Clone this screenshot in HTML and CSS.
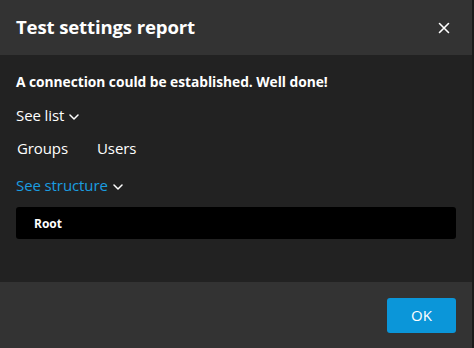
FILE: index.html
```html
<!DOCTYPE html>
<html>
<head>
<meta charset="utf-8">
<link rel="stylesheet" href="styles.css">
</head>
<body>
<div class="page">
  <div class="dialog">
    <div class="header">
      <h1 class="title">Test settings report</h1>
      <button class="close" aria-label="Close">
        <svg width="12" height="12" viewBox="0 0 12 12"><path d="M1.5 1.5L10.5 10.5M10.5 1.5L1.5 10.5" stroke="#fff" stroke-width="1.6" stroke-linecap="round"/></svg>
      </button>
    </div>
    <div class="body">
      <p class="success">A connection could be established. Well done!</p>
      <div class="toggle">See list <svg class="chev" width="10" height="6" viewBox="0 0 10 6"><path d="M1 1l4 4 4-4" fill="none" stroke="#fff" stroke-width="1.5" stroke-linecap="round" stroke-linejoin="round"/></svg></div>
      <div class="tabs"><span class="tab">Groups</span><span class="tab">Users</span></div>
      <div class="toggle blue">See structure <svg class="chev" width="10" height="6" viewBox="0 0 10 6"><path d="M1 1l4 4 4-4" fill="none" stroke="#fff" stroke-width="1.5" stroke-linecap="round" stroke-linejoin="round"/></svg></div>
      <div class="tree"><span class="node">Root</span></div>
    </div>
    <div class="footer">
      <button class="ok">OK</button>
    </div>
  </div>
</div>
</body>
</html>
```
FILE: styles.css
```css
* { box-sizing: border-box; }
html, body { margin: 0; padding: 0; background: #1b1b1b; }
body { font-family: "Open Sans", "Noto Sans", sans-serif; color: #fff; }
.page { width: 474px; height: 348px; }
.dialog { width: 472px; height: 348px; display: flex; flex-direction: column; background: #222; }
.header { height: 55px; background: #333; display: flex; align-items: center; justify-content: space-between; padding: 0 18px 0 16px; }
.title { margin: 0; font-size: 18.6px; font-weight: 700; letter-spacing: -0.15px; line-height: 1; padding-bottom: 1px; }
.close { background: none; border: 0; padding: 0; width: 20px; height: 20px; display: flex; align-items: center; justify-content: center; cursor: pointer; }
.body { flex: 1; padding: 16px 16px 0 16px; display: flex; flex-direction: column; }
.success { margin: 0; font-size: 13.8px; font-weight: 700; line-height: 22px; letter-spacing: -0.05px; }
.toggle { margin-top: 12px; font-size: 15px; line-height: 20px; display: flex; align-items: center; gap: 5px; letter-spacing: -0.1px; }
.toggle.blue { color: #1a9de0; margin-top: 17px; }
.chev { margin-top: 3px; }
.tabs { margin-top: 13px; display: flex; gap: 29px; padding-left: 1px; font-size: 15px; line-height: 20px; letter-spacing: -0.1px; }
.tree { margin-top: 12px; height: 32px; background: #000; border-radius: 3px; display: flex; align-items: center; padding-left: 18px; }
.node { font-size: 12px; font-weight: 700; }
.footer { height: 66px; background: #333; display: flex; align-items: center; justify-content: flex-end; padding: 0 16px; }
.ok { width: 69px; height: 35px; background: #0b96d9; color: #fff; border: 0; border-radius: 3px; font-family: inherit; font-size: 15px; cursor: pointer; }
```
